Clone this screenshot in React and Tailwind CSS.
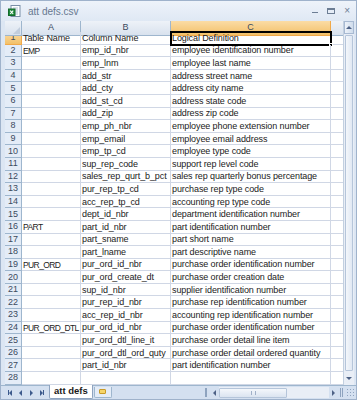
import React from 'react';

const rows = [
    ['Table Name', 'Column Name', 'Logical Definition'],
    ['EMP', 'emp_id_nbr', 'employee identification number'],
    ['', 'emp_lnm', 'employee last name'],
    ['', 'add_str', 'address street name'],
    ['', 'add_cty', 'address city name'],
    ['', 'add_st_cd', 'address state code'],
    ['', 'add_zip', 'address zip code'],
    ['', 'emp_ph_nbr', 'employee phone extension number'],
    ['', 'emp_email', 'employee email address'],
    ['', 'emp_tp_cd', 'employee type code'],
    ['', 'sup_rep_code', 'support rep level code'],
    ['', 'sales_rep_qurt_b_pct', 'sales rep quarterly bonus percentage'],
    ['', 'pur_rep_tp_cd', 'purchase rep type code'],
    ['', 'acc_rep_tp_cd', 'accounting rep type code'],
    ['', 'dept_id_nbr', 'department identification number'],
    ['PART', 'part_id_nbr', 'part identification number'],
    ['', 'part_sname', 'part short name'],
    ['', 'part_lname', 'part descriptive name'],
    ['PUR_ORD', 'pur_ord_id_nbr', 'purchase order identification number'],
    ['', 'pur_ord_create_dt', 'purchase order creation date'],
    ['', 'sup_id_nbr', 'supplier identification number'],
    ['', 'pur_rep_id_nbr', 'purchase rep identification number'],
    ['', 'acc_rep_id_nbr', 'accounting rep identification number'],
    ['PUR_ORD_DTL', 'pur_ord_id_nbr', 'purchase order identification number'],
    ['', 'pur_ord_dtl_line_it', 'purchase order detail line item'],
    ['', 'pur_ord_dtl_ord_quty', 'purchase order detail ordered quantity'],
    ['', 'part_id_nbr', 'part identification number'],
    ['', '', ''],
];

const ExcelIcon = () => (
    <svg width="13" height="13" viewBox="0 0 13 13">
        <rect x="3" y="0.5" width="9" height="11" fill="#fff" stroke="#7a8fa8" />
        <path d="M5 3h5M5 5h5M5 7h5M5 9h5" stroke="#9bb0c8" strokeWidth="0.8" />
        <rect x="0.5" y="4" width="6.5" height="6.5" fill="#1f8a3c" stroke="#146a2b" />
        <path d="M2.2 5.6l3 3.4M5.2 5.6l-3 3.4" stroke="#fff" strokeWidth="1.1" />
    </svg>
);

const App = () => {
    return (
        <div className="w-[357px] h-[400px] bg-[#dce6f3] border border-[#9fb2cb] flex flex-col font-['Liberation_Sans',sans-serif] overflow-hidden">
            {/* Title bar */}
            <div className="h-[20px] flex items-center bg-gradient-to-b from-[#eef3fa] to-[#dfe8f4] shrink-0">
                <div className="ml-[7px] mt-[1px]"><ExcelIcon /></div>
                <span className="ml-[7px] text-[10px] text-[#66788f]">att defs.csv</span>
                <div className="ml-auto mr-[6px] flex items-center gap-[9px] text-[#6c7d94] text-[9px]">
                    <span className="block w-[6px] h-[1.5px] bg-[#6c7d94] mt-[3px]" />
                    <span className="block w-[8px] h-[6px] border border-[#6c7d94] border-t-2" />
                    <span className="text-[10px] leading-none">×</span>
                </div>
            </div>

            {/* Sheet area */}
            <div className="flex flex-1 min-h-0">
                <div className="w-[4px] shrink-0" />
                <div className="w-[338px] shrink-0 bg-white overflow-hidden">
                    {/* Column headers */}
                    <div className="grid grid-cols-[17px_59px_90px_160px_12px] h-[11px] text-[9px] text-[#3b4a5e]">
                        <div className="bg-gradient-to-b from-[#eef2f8] to-[#d9e2ee] border-r border-b border-[#9eb6ce] relative">
                            <span className="absolute right-[1px] bottom-[1px] w-0 h-0 border-l-[7px] border-l-transparent border-b-[7px] border-b-[#c1cddd]" />
                        </div>
                        <div className="bg-gradient-to-b from-[#eef2f8] to-[#d9e2ee] border-r border-b border-[#9eb6ce] flex items-center justify-center">A</div>
                        <div className="bg-gradient-to-b from-[#eef2f8] to-[#d9e2ee] border-r border-b border-[#9eb6ce] flex items-center justify-center">B</div>
                        <div className="bg-gradient-to-b from-[#fbdca5] to-[#f2c067] border-r border-b border-[#f0a94a] flex items-center justify-center">C</div>
                        <div className="bg-gradient-to-b from-[#eef2f8] to-[#d9e2ee] border-b border-[#9eb6ce]" />
                    </div>
                    {/* Rows */}
                    {rows.map((r, i) => (
                        <div key={i} className="grid grid-cols-[17px_59px_90px_160px_12px] h-[12.6px] text-[9px] tracking-[-0.1px] text-[#222] leading-none">
                            <div className={`border-r border-b flex items-center justify-center text-[#3b4a5e] text-[9px] tracking-normal ${i === 0 ? 'bg-gradient-to-b from-[#fbdca5] to-[#f2c067] border-[#f0a94a]' : 'bg-[#e4ecf7] border-[#9eb6ce]'}`}>{i + 1}</div>
                            <div className={`border-r border-b border-[#d0d7e5] flex items-center pl-[1px] pt-[1px] whitespace-nowrap overflow-hidden ${i > 0 ? 'text-[8.5px] tracking-[-0.6px]' : ''}`}>{r[0]}</div>
                            <div className="border-r border-b border-[#d0d7e5] flex items-center pl-[1px] pt-[1px] whitespace-nowrap overflow-hidden">{r[1]}</div>
                            <div className={`border-r border-b flex items-center pl-[1px] pt-[1px] whitespace-nowrap relative ${i === 0 ? 'border-[#d0d7e5] outline-2 outline-black -outline-offset-1' : 'border-[#d0d7e5]'}`}>
                                {r[2]}
                                {i === 0 && <span className="absolute right-[-3px] bottom-[-3px] w-[4px] h-[4px] bg-black border border-white" />}
                            </div>
                            <div className="border-b border-[#d0d7e5]" />
                        </div>
                    ))}
                </div>

                {/* Vertical scrollbar */}
                <div className="w-[11px] shrink-0 bg-[#e9eef6] border-l border-[#c3d0e0] flex flex-col">
                    <div className="h-[13px] flex items-center justify-center bg-gradient-to-r from-[#eef3fa] to-[#cfdcec] border border-[#a8bad2]">
                        <span className="w-0 h-0 border-l-[3px] border-r-[3px] border-b-[3px] border-l-transparent border-r-transparent border-b-[#4d6185]" />
                    </div>
                    <div className="flex-1 mx-[1px] my-[1px] bg-gradient-to-r from-[#f4f7fb] to-[#e0e8f3] border border-[#b5c5da] rounded-[1px]" />
                    <div className="h-[13px] flex items-center justify-center">
                        <span className="w-0 h-0 border-l-[3px] border-r-[3px] border-t-[3px] border-l-transparent border-r-transparent border-t-[#4d6185]" />
                    </div>
                </div>
                <div className="w-[4px] shrink-0" />
            </div>

            {/* Sheet tabs + horizontal scrollbar */}
            <div className="h-[14px] shrink-0 flex items-center bg-[#d4e0f0] border-t border-[#9eb6ce]">
                <div className="ml-[5px] w-[40px] flex items-center justify-between px-[2px] text-[#3d5a8c]">
                    <span className="flex items-center"><span className="w-[1px] h-[5px] bg-[#3d5a8c]" /><span className="w-0 h-0 border-t-[3px] border-b-[3px] border-r-[3px] border-t-transparent border-b-transparent border-r-[#3d5a8c]" /></span>
                    <span className="w-0 h-0 border-t-[3px] border-b-[3px] border-r-[3px] border-t-transparent border-b-transparent border-r-[#3d5a8c]" />
                    <span className="w-0 h-0 border-t-[3px] border-b-[3px] border-l-[3px] border-t-transparent border-b-transparent border-l-[#3d5a8c]" />
                    <span className="flex items-center"><span className="w-0 h-0 border-t-[3px] border-b-[3px] border-l-[3px] border-t-transparent border-b-transparent border-l-[#3d5a8c]" /><span className="w-[1px] h-[5px] bg-[#3d5a8c]" /></span>
                </div>
                <div className="ml-[3px] h-[14px] -mt-[1px] px-[4px] bg-white border-x border-b border-[#8ea3bf] rounded-b-[2px] text-[9.5px] font-bold text-[#1a1a1a] flex items-center">att defs</div>
                <div className="ml-[1px] w-[18px] h-[11px] -mt-[1px] bg-[#e4ecf7] border-x border-b border-[#9eb6ce] rounded-b-[2px] flex items-center justify-center">
                    <span className="w-[7px] h-[5px] bg-[#f5d56a] border border-[#c89b2a] rounded-[1px]" />
                </div>
                <div className="ml-auto flex items-center h-[12px]">
                    <span className="w-[2px] h-[9px] bg-[#8ea3bf] mr-[3px]" />
                    <div className="w-[9px] h-[11px] flex items-center justify-center">
                        <span className="w-0 h-0 border-t-[3px] border-b-[3px] border-r-[3px] border-t-transparent border-b-transparent border-r-[#4d6185]" />
                    </div>
                    <div className="w-[110px] h-[11px] bg-[#e9eef6] flex items-center">
                        <div className="w-[68px] h-[10px] bg-gradient-to-b from-[#f4f7fb] to-[#dbe4f0] border border-[#b5c5da] rounded-[1px] flex items-center justify-center">
                            <span className="w-[5px] h-[4px] border-x border-[#a0b0c8]" />
                        </div>
                    </div>
                    <div className="w-[9px] h-[11px] flex items-center justify-center">
                        <span className="w-0 h-0 border-t-[3px] border-b-[3px] border-l-[3px] border-t-transparent border-b-transparent border-l-[#4d6185]" />
                    </div>
                    <span className="w-[3px] h-[9px] border-x border-[#8ea3bf] ml-[2px]" />
                    <span className="w-[8px] h-[9px] ml-[3px] mr-[2px] bg-[radial-gradient(#8ea3bf_1px,transparent_1px)] bg-[length:3px_3px]" />
                </div>
            </div>
        </div>
    );
};

export default App;
